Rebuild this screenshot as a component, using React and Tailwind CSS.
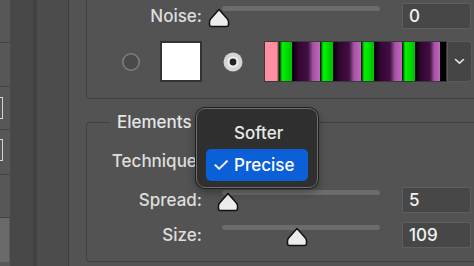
import React from 'react';

const font = { fontFamily: 'Inter, "Noto Sans", sans-serif' };

const Thumb = () => (
    <svg width="22" height="20" viewBox="0 0 22 20">
        <path
            d="M11 1.5 L19 10.5 Q20.5 12 20.5 14 L20.5 16.5 Q20.5 18.5 18.5 18.5 L3.5 18.5 Q1.5 18.5 1.5 16.5 L1.5 14 Q1.5 12 3 10.5 Z"
            fill="#ececec"
            stroke="#111"
            strokeWidth="1.5"
            strokeLinejoin="round"
        />
    </svg>
);

// one labelled slider row: label, track with thumb, number field
const SliderRow = ({ label, value, thumbLeft, className = '' }) => (
    <div className={`flex items-center h-[26px] ${className}`}>
        <span className="w-[115px] text-right text-[17px] font-medium text-[#dedede] leading-none">{label}</span>
        <div className="relative w-[200px] h-[26px]">
            <div className="absolute left-[20px] top-[3px] w-[158px] h-[5px] rounded-full bg-[#6c6c6c]" />
            <div className="absolute top-[5px]" style={{ left: thumbLeft }}>
                <Thumb />
            </div>
        </div>
        <div className="w-[69px] h-[26px] bg-[#474747] border border-[#5e5e5e] flex items-center pl-[6px] text-[17px] font-medium text-[#f2f2f2] leading-none">
            {value}
        </div>
    </div>
);

const GradientBar = () => {
    const stripes = [0, 1, 2, 3];
    return (
        <div className="flex w-[183px] h-[41px] border border-[#3a3a3a] bg-black overflow-hidden">
            <div className="w-[14px] shrink-0 bg-linear-to-r from-[#ff8fa0] via-[#ff8fa0] via-85% to-[#3a2024]" />
            {stripes.map(i => (
                <React.Fragment key={i}>
                    <div className="w-[13px] shrink-0 bg-linear-to-r from-[#021002] via-[#00f400] via-25% to-[#00c000]" />
                    <div className={`${i === 3 ? 'w-[15px]' : 'w-[16px]'} shrink-0 bg-linear-to-r from-[#050005] via-[#320632] via-40% to-[#440e44]`} />
                    <div className={`${i === 3 ? 'w-[10px]' : 'w-[12px]'} shrink-0 bg-linear-to-r from-[#3a143a] via-[#a452a4] via-40% to-[#c266c2]`} />
                </React.Fragment>
            ))}
            <div className="flex-1 bg-black" />
        </div>
    );
};

export default function App() {
    return (
        <div className="relative w-[474px] h-[266px] overflow-hidden flex bg-[#535353]" style={font}>
            {/* left list strip */}
            <div className="w-[10px] shrink-0 flex flex-col bg-[#575757]">
                <div className="h-[43px] border-b border-[#424242]" />
                <div className="h-[44px] border-b border-[#424242]" />
                <div className="h-[43px] border-b border-[#424242] pt-[10px]">
                    <div className="w-[3px] h-[22px] border-y border-r border-[#d4d4d4]" />
                </div>
                <div className="h-[45px] border-b border-[#424242] pt-[9px]">
                    <div className="w-[3px] h-[22px] border-y border-r border-[#d4d4d4]" />
                </div>
                <div className="h-[43px] border-b border-[#424242]" />
                <div className="h-[44px] bg-[#6a6a6a] border-r border-[#5a5a5a]" />
            </div>
            <div className="w-[23px] shrink-0 bg-[#484848]" />
            <div className="w-[4px] shrink-0 bg-[#414141]" />
            <div className="w-[31px] shrink-0 bg-[#4c4c4c]" />
            <div className="w-[1px] shrink-0 bg-[#3e3e3e]" />

            {/* main panel */}
            <div className="flex-1 flex flex-col pl-[17px]">
                {/* Quality group */}
                <div className="-mt-[10px] w-[400px] shrink-0 border border-[#404040] rounded-[3px] pt-[12px] pb-[16px]">
                    <SliderRow label="Noise:" value="0" thumbLeft={6} />
                    <div className="flex items-center mt-[12px] h-[41px]">
                        <svg className="ml-[34px]" width="20" height="20" viewBox="0 0 20 20">
                            <circle cx="10" cy="10" r="8.2" fill="#4a4a4a" stroke="#7e7e7e" strokeWidth="1.6" />
                        </svg>
                        <div className="ml-[19px] w-[42px] h-[41px] bg-white border-2 border-[#333]" />
                        <svg className="ml-[21px]" width="20" height="20" viewBox="0 0 20 20">
                            <circle cx="10" cy="10" r="9.5" fill="#d4d4d4" />
                            <circle cx="10" cy="10" r="5.5" fill="#efefef" />
                            <circle cx="10" cy="10" r="3.4" fill="#222" />
                        </svg>
                        <div className="ml-[21px] flex">
                            <GradientBar />
                            <div className="w-[25px] h-[41px] bg-[#454545] border border-[#5a5a5a] rounded-r-[4px] flex items-center justify-center">
                                <svg width="11" height="7" viewBox="0 0 11 7">
                                    <path d="M1.5 1.5 L5.5 5.2 L9.5 1.5" fill="none" stroke="#e4e4e4" strokeWidth="1.6" strokeLinecap="round" strokeLinejoin="round" />
                                </svg>
                            </div>
                        </div>
                    </div>
                </div>

                {/* Elements group */}
                <fieldset className="mt-[13px] w-[400px] shrink-0 border border-[#404040] rounded-[3px] p-0 pt-[16px] pb-[13px]">
                    <legend className="ml-[23px] px-[7px] text-[17px] font-medium leading-[20px] text-[#e6e6e6]">Elements</legend>
                    <div className="flex items-center h-[26px]">
                        <span className="w-[115px] text-right text-[17px] font-medium text-[#dedede] leading-none">Technique:</span>
                    </div>
                    <SliderRow label="Spread:" value="5" thumbLeft={15} className="mt-[13px]" />
                    <SliderRow label="Size:" value="109" thumbLeft={84} className="mt-[9px]" />
                </fieldset>
            </div>

            {/* open Technique popup menu */}
            <div className="absolute left-[196px] top-[108px] w-[122px] h-[80px] rounded-[9px] bg-[#2f2f2f] border border-[#6e6e6e] shadow-[0_0_0_1px_#1e1e1e,0_4px_10px_rgba(0,0,0,0.35)] px-[9px] pt-[9px]">
                <div className="h-[31px] flex items-center pl-[28px] text-[17px] font-medium text-[#e8e8e8] leading-none">Softer</div>
                <div className="h-[32px] flex items-center rounded-[5px] bg-[#0b5fd7] text-[17px] font-medium text-white leading-none">
                    <span className="w-[28px] pl-[6px] text-[20px] font-normal">✓</span>
                    <span>Precise</span>
                </div>
            </div>
        </div>
    );
}
